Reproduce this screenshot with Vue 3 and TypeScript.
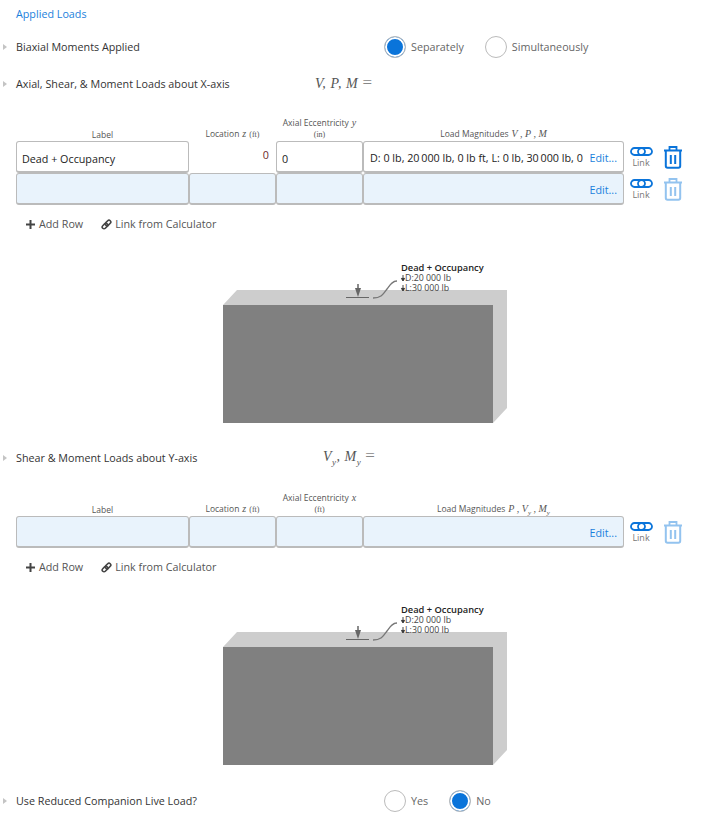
<script setup lang="ts">
interface LoadRow {
  label: string;
  location: string;
  ecc: string;
  mags: string;
  filled: boolean;
}

interface Column {
  text: string;
  math?: string;
  sub?: string;
  subscripted?: boolean;
}

interface LoadTable {
  title: string;
  math: string;
  mathSub: boolean;
  columns: Column[];
  rows: LoadRow[];
}

const tables: LoadTable[] = [
  {
    title: 'Axial, Shear, & Moment Loads about X-axis',
    math: 'V, P, M',
    mathSub: false,
    columns: [
      { text: 'Label' },
      { text: 'Location', math: 'z', sub: '(ft)' },
      { text: 'Axial Eccentricity', math: 'y', sub: '(in)' },
      { text: 'Load Magnitudes', math: 'V , P , M' },
    ],
    rows: [
      {
        label: 'Dead + Occupancy',
        location: '0',
        ecc: '0',
        mags: 'D: 0 lb, 20\u2009000 lb, 0 lb ft, L: 0 lb, 30\u2009000 lb, 0',
        filled: true,
      },
      { label: '', location: '', ecc: '', mags: '', filled: false },
    ],
  },
  {
    title: 'Shear & Moment Loads about Y-axis',
    math: '',
    mathSub: true,
    columns: [
      { text: 'Label' },
      { text: 'Location', math: 'z', sub: '(ft)' },
      { text: 'Axial Eccentricity', math: 'x', sub: '(ft)' },
      { text: 'Load Magnitudes', subscripted: true },
    ],
    rows: [{ label: '', location: '', ecc: '', mags: '', filled: false }],
  },
];
</script>

<template>
  <div class="page">
    <div class="section-title">Applied Loads</div>

    <div class="field">
      <span class="caret"></span>
      <span class="field-label">Biaxial Moments Applied</span>
      <div class="radios">
        <label class="radio"><i class="dot on"></i>Separately</label>
        <label class="radio"><i class="dot"></i>Simultaneously</label>
      </div>
    </div>

    <template v-for="(table, t) in tables" :key="t">
      <div class="field">
        <span class="caret"></span>
        <span class="field-label">{{ table.title }}</span>
        <span v-if="!table.mathSub" class="math-eq">{{ table.math }} <b>=</b></span>
        <span v-else class="math-eq math-eq-b">V<sub>y</sub>, M<sub>y</sub> <b>=</b></span>
      </div>

      <div class="head" :class="{ 'head-b': t === 1 }">
        <div v-for="col in table.columns" :key="col.text" class="head-cell">
          <span>{{ col.text }}<em v-if="col.math">{{ col.math }}</em
            ><em v-if="col.subscripted">P , V<sub>y</sub> , M<sub>y</sub></em
            ><small v-if="col.sub && col.text === 'Location'">{{ col.sub }}</small></span>
          <small v-if="col.sub && col.text !== 'Location'" class="sub">{{ col.sub }}</small>
        </div>
      </div>

      <div v-for="(row, r) in table.rows" :key="r" class="load-row">
        <div class="grid">
          <div class="cell" :class="{ blank: !row.filled }">{{ row.label }}</div>
          <div class="cell cell-loc" :class="{ blank: !row.filled, plain: row.filled }">{{ row.location }}</div>
          <div class="cell" :class="{ blank: !row.filled }">{{ row.ecc }}</div>
          <div class="cell cell-mags" :class="{ blank: !row.filled }">
            <span class="mags">{{ row.mags }}</span>
            <span class="edit">Edit...</span>
          </div>
        </div>
        <div class="link-btn">
          <svg width="23" height="9" viewBox="0 0 23 9">
            <rect x="1" y="1" width="14" height="7" rx="3.5" fill="none" stroke="#0a74da" stroke-width="1.8" />
            <rect x="8" y="1" width="14" height="7" rx="3.5" fill="none" stroke="#0a74da" stroke-width="1.8" />
          </svg>
          <span>Link</span>
        </div>
        <svg class="trash" :class="{ faded: !row.filled }" width="20" height="24" viewBox="0 0 20 24">
          <path d="M1 5.5h18M6.5 5V2h7v3" fill="none" stroke="currentColor" stroke-width="1.8" />
          <path d="M2.8 6V21a1.8 1.8 0 0 0 1.8 1.8h10.8a1.8 1.8 0 0 0 1.8-1.8V6" fill="none" stroke="currentColor" stroke-width="2" />
          <path d="M7.8 10v9M12.2 10v9" fill="none" stroke="currentColor" stroke-width="2" />
        </svg>
      </div>

      <div class="actions">
        <span class="action"><svg width="11" height="11" viewBox="0 0 11 11"><path d="M5.5 1v9M1 5.5h9" stroke="#444" stroke-width="2" /></svg>Add Row</span>
        <span class="action">
          <svg width="11" height="11" viewBox="0 0 11 11">
            <g transform="rotate(-45 5.5 5.5)" fill="none" stroke="#444" stroke-width="1.6">
              <rect x="0.2" y="3.7" width="6.2" height="3.6" rx="1.8" />
              <rect x="4.6" y="3.7" width="6.2" height="3.6" rx="1.8" />
            </g>
          </svg>Link from Calculator
        </span>
      </div>

      <svg class="diagram" :class="{ 'diagram-b': t === 1 }" width="701" height="184" viewBox="0 0 701 184">
        <polygon points="223,50 237,35 507,35 507,153 493,168 223,168" fill="#cdcdcd" />
        <rect x="223" y="50" width="270" height="118" fill="#808080" />
        <path d="M346 42.5h23" stroke="#666" stroke-width="1" fill="none" />
        <path d="M355 33h6l-3 9z" fill="#666" />
        <path d="M358 29v5" stroke="#666" stroke-width="1.5" />
        <path d="M373 43c9 0 11-5 14-9s5-8 10-8" stroke="#777" stroke-width="1.3" fill="none" />
        <path d="M403 20v4M401.4 23.4 403 26l1.6-2.6z" stroke="#333" stroke-width="0.9" fill="#333" />
        <path d="M403 30v4M401.4 33.4 403 36l1.6-2.6z" stroke="#333" stroke-width="0.9" fill="#333" />
        <text x="401" y="15.5" class="d-title">Dead + Occupancy</text>
        <text x="405" y="26" class="d-line">D:20 000 lb</text>
        <text x="405" y="36" class="d-line">L:30 000 lb</text>
      </svg>
    </template>

    <div class="field field-last">
      <span class="caret"></span>
      <span class="field-label">Use Reduced Companion Live Load?</span>
      <div class="radios">
        <label class="radio"><i class="dot"></i>Yes</label>
        <label class="radio"><i class="dot on"></i>No</label>
      </div>
    </div>
  </div>
</template>

<style scoped>
.page {
  width: 701px;
  height: 830px;
  overflow: hidden;
  font-family: "Open Sans", "Liberation Sans", sans-serif;
  font-size: 10.75px;
  color: #333;
  background: #fff;
}

.section-title {
  height: 28px;
  line-height: 28px;
  padding-left: 16px;
  color: #1b7fdc;
}

.field {
  display: flex;
  align-items: center;
  height: 37px;
  padding-left: 3px;
  position: relative;
}

.field-last {
  margin-top: 1px;
}

.caret {
  width: 0;
  height: 0;
  border-left: 4px solid #c4c4c4;
  border-top: 3px solid transparent;
  border-bottom: 3px solid transparent;
  margin-right: 9px;
}

.field-label {
  color: #333;
}

.radios {
  position: absolute;
  left: 384px;
  top: 0;
  bottom: 0;
  display: flex;
  align-items: center;
  gap: 21px;
}

.radio {
  display: flex;
  align-items: center;
  gap: 5px;
  color: #666;
}

.dot {
  box-sizing: border-box;
  display: block;
  width: 22px;
  height: 22px;
  border: 1px solid #bbb;
  border-radius: 50%;
  background: #fff;
}

.dot.on {
  background: #0a74da;
  box-shadow: inset 0 0 0 2px #fff;
}

.math-eq {
  position: absolute;
  left: 315px;
  font-family: "Liberation Serif", serif;
  font-style: italic;
  font-size: 14px;
  color: #555;
  letter-spacing: 0.6px;
}

.math-eq-b {
  left: 323px;
  letter-spacing: 0.5px;
}

.math-eq b {
  font-style: normal;
  font-weight: 400;
  font-size: 17px;
  line-height: 14px;
  color: #888;
}

.math-eq sub {
  font-size: 9px;
}

.head {
  display: grid;
  grid-template-columns: 173px 87px 87px 261px;
  height: 28px;
  margin: 11px 0 0 16px;
  font-size: 8.5px;
  color: #555;
}

.head-b {
  margin-top: 12px;
}

.head-cell {
  display: flex;
  flex-direction: column;
  align-items: center;
  justify-content: flex-end;
  line-height: 12px;
  white-space: nowrap;
}

.head-cell:nth-child(4) {
  padding-bottom: 1px;
}

.head-cell em {
  font-family: "Liberation Serif", serif;
  font-size: 10px;
  margin-left: 3px;
}

.head-cell em sub {
  font-size: 7px;
  line-height: 0;
}

.head-cell small {
  font-family: "Liberation Serif", serif;
  font-size: 8px;
}

.head-cell span small {
  margin-left: 3px;
}

.load-row {
  display: flex;
  align-items: center;
  height: 32px;
  padding-left: 16px;
}

.grid {
  display: grid;
  grid-template-columns: 173px 87px 87px 261px;
  height: 32px;
  flex: none;
}

.cell {
  box-sizing: border-box;
  display: flex;
  align-items: center;
  padding: 4px 5px 0;
  border: 1px solid #bbb;
  border-bottom-width: 2px;
  border-radius: 3px;
  background: #fff;
  color: #222;
  white-space: nowrap;
  overflow: hidden;
}

.cell.blank {
  background: #e9f3fc;
}

.cell-loc {
  justify-content: flex-end;
}

.cell.plain {
  border-color: transparent;
  color: #6e2a2a;
  padding: 0 6px 4px;
}

.cell-mags {
  justify-content: space-between;
  padding: 2px 6px 0;
}

.edit {
  color: #1b7fdc;
}

.link-btn {
  width: 34px;
  display: flex;
  flex-direction: column;
  align-items: center;
  font-size: 9px;
  line-height: 10px;
  color: #777;
}

.link-btn span {
  margin-top: 2px;
}

.trash {
  margin-left: 5px;
  color: #0a74da;
}

.trash.faded {
  color: #93c3ef;
}

.actions {
  display: flex;
  align-items: center;
  height: 38px;
  padding-left: 25px;
  gap: 18px;
  color: #555;
}

.action {
  display: flex;
  align-items: center;
  gap: 3px;
}

.diagram {
  display: block;
  margin-top: 12px;
  height: 184px;
}

.diagram-b {
  margin-top: 11px;
}

.d-title {
  font-family: "Open Sans", sans-serif;
  font-size: 9.3px;
  font-weight: 600;
  fill: #222;
}

.d-line {
  font-family: "Open Sans", sans-serif;
  font-size: 8.8px;
  fill: #444;
}
</style>

<style>
html,
body {
  margin: 0;
  background: #fff;
}
</style>
